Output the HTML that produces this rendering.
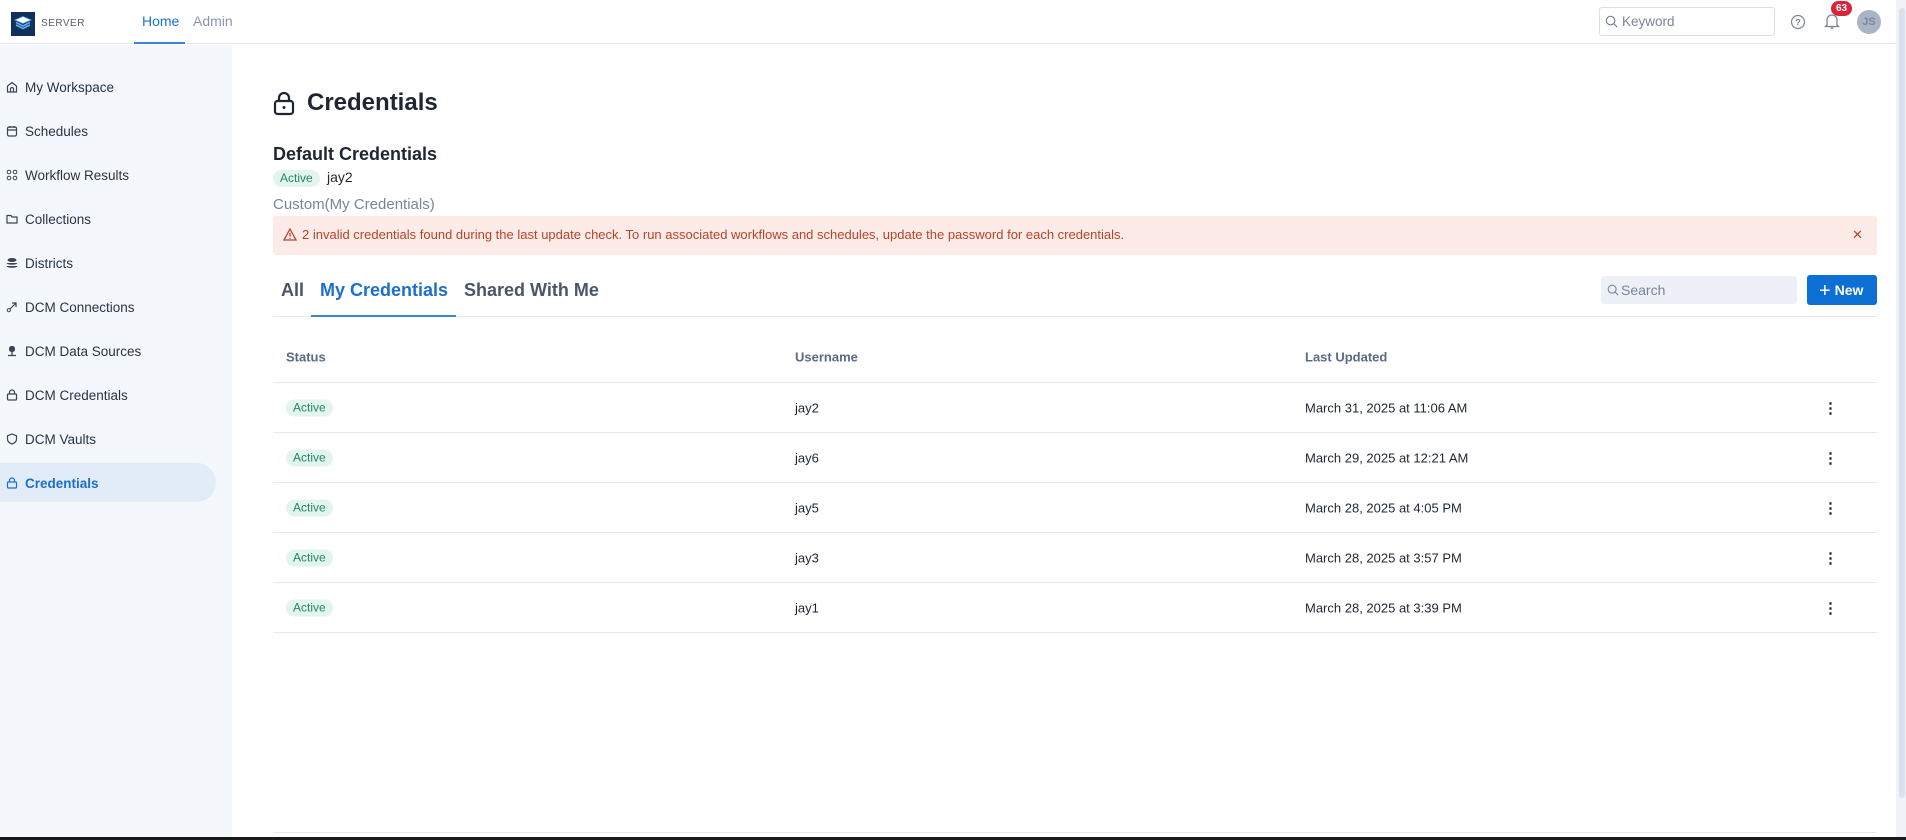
<!DOCTYPE html>
<html><head><meta charset="utf-8"><style>
*{box-sizing:border-box;margin:0;padding:0}
body{width:1906px;height:840px;overflow:hidden;background:#fff;font-family:"Liberation Sans",Arial,sans-serif;color:#1f2633;position:relative}
.a{position:absolute}
.hdr{left:0;top:0;width:1906px;height:44px;border-bottom:1px solid #e3e8f0;background:#fff}
.side{left:0;top:45px;width:232px;height:795px;background:#f4f7fc}
.nav{left:0;width:232px;height:20px;font-size:13.5px;color:#2b3444;display:flex;align-items:center}
.nav svg{position:absolute;left:6px}
.nav span{position:absolute;left:25px}
.badge{background:#e3f4ee;color:#1f8a5e;font-size:12px;border-radius:10px;height:17px;line-height:17px;padding:0 7px;display:inline-block}
.row{left:273px;width:1604px;height:50px;border-bottom:1px solid #e6eaf0;font-size:13px;color:#1f2633}
.row>*{position:absolute;top:50%;transform:translateY(-50%)}
</style></head><body>
<div class="a hdr"></div>
<div class="a" style="left:11px;top:12px;width:24px;height:24px;background:#11305a">
<svg width="24" height="24" viewBox="0 0 24 24"><path d="M5 13l7 3.5 7-3.5M5 10.5l7 3.5 7-3.5M12 5l7 3-7 3-7-3z" fill="none" stroke="#5eb0f0" stroke-width="1.6"/><path d="M12 5l7 3-7 3-7-3z" fill="#fff"/></svg></div>
<div class="a" style="left:41px;top:18px;font-size:10px;color:#555d6c;letter-spacing:.5px">SERVER</div>
<div class="a" style="left:142px;top:13px;font-size:14px;color:#1a73d9">Home</div>
<div class="a" style="left:134px;top:42px;width:51px;height:2px;background:#3b86da"></div>
<div class="a" style="left:193px;top:13px;font-size:14px;color:#8a96ac">Admin</div>
<div class="a" style="left:1599px;top:7px;width:176px;height:29px;border:1px solid #d9dfea;border-radius:3px"></div>
<svg class="a" style="left:1605px;top:15px" width="13" height="13" viewBox="0 0 14 14"><circle cx="6" cy="6" r="4.6" fill="none" stroke="#7a8599" stroke-width="1.3"/><path d="M9.5 9.5L13 13" stroke="#7a8599" stroke-width="1.3"/></svg>
<div class="a" style="left:1622px;top:14px;font-size:13.5px;color:#7a8599">Keyword</div>
<svg class="a" style="left:1790px;top:14px" width="16" height="16" viewBox="0 0 16 16"><circle cx="8" cy="8" r="6.5" fill="none" stroke="#7a8599" stroke-width="1.2"/><text x="8" y="11.5" font-size="9" font-family="Liberation Sans" text-anchor="middle" fill="#7a8599" font-weight="bold">?</text></svg>
<svg class="a" style="left:1824px;top:12px" width="16" height="18" viewBox="0 0 16 18"><path d="M3 13V8a5 5 0 0110 0v5l1.5 1.5h-13z M6.5 16h3" fill="none" stroke="#7a8599" stroke-width="1.3"/></svg>
<div class="a" style="left:1831px;top:1px;width:21px;height:15px;border-radius:8px;background:#d9253b;color:#fff;font-size:10px;font-weight:bold;text-align:center;line-height:15px">63</div>
<div class="a" style="left:1857px;top:10px;width:24px;height:24px;border-radius:50%;background:#a9b4c6;color:#7d889c;font-size:11px;font-weight:bold;text-align:center;line-height:24px">JS</div>
<div class="a" style="left:1896px;top:0;width:10px;height:837px;background:#f0f2f7"></div>
<div class="a" style="left:1899px;top:8px;width:6px;height:790px;background:#dbe1ec;border-radius:3px"></div>

<div class="a side"></div>
<div class="a" style="left:0;top:463px;width:216px;height:39px;background:#e1ecf8;border-radius:0 20px 20px 0"></div>
<div class="a nav" style="top:77px"><svg width="12" height="12" viewBox="0 0 12 12"><path d="M1.5 11V5L6 1.5 10.5 5v6h-9z M4.5 11V8a1.5 1.5 0 013 0v3" fill="none" stroke="#3b4455" stroke-width="1.2"/></svg><span>My Workspace</span></div>
<div class="a nav" style="top:121px"><svg width="12" height="12" viewBox="0 0 12 12"><rect x="1.5" y="2" width="9" height="9" rx="1.5" fill="none" stroke="#3b4455" stroke-width="1.2"/><path d="M1.5 5h9M4 1v2M8 1v2" stroke="#3b4455" stroke-width="1.2"/></svg><span>Schedules</span></div>
<div class="a nav" style="top:165px"><svg width="12" height="12" viewBox="0 0 12 12"><circle cx="3" cy="3" r="1.8" fill="none" stroke="#3b4455"/><circle cx="9" cy="3" r="1.8" fill="none" stroke="#3b4455"/><circle cx="3" cy="9" r="1.8" fill="none" stroke="#3b4455"/><circle cx="9" cy="9" r="1.8" fill="none" stroke="#3b4455"/></svg><span>Workflow Results</span></div>
<div class="a nav" style="top:209px"><svg width="12" height="12" viewBox="0 0 12 12"><path d="M1 2.5h4l1 1.5h5v6H1z" fill="none" stroke="#3b4455" stroke-width="1.2"/></svg><span>Collections</span></div>
<div class="a nav" style="top:253px"><svg width="12" height="12" viewBox="0 0 12 12"><ellipse cx="6" cy="3" rx="4.5" ry="2" fill="#3b4455"/><path d="M1.5 6c0 1.2 9 1.2 9 0M1.5 9c0 1.2 9 1.2 9 0" stroke="#3b4455" stroke-width="1.6" fill="none"/></svg><span>Districts</span></div>
<div class="a nav" style="top:297px"><svg width="12" height="12" viewBox="0 0 12 12"><path d="M4 8l6-6M6 2h4v4" fill="none" stroke="#3b4455" stroke-width="1.2"/><circle cx="2.8" cy="9.2" r="1.6" fill="none" stroke="#3b4455"/></svg><span>DCM Connections</span></div>
<div class="a nav" style="top:341px"><svg width="12" height="12" viewBox="0 0 12 12"><rect x="3" y="1" width="6" height="6" rx="2.5" fill="#3b4455"/><path d="M6 7v3M2 10.5h8" stroke="#3b4455" stroke-width="1.3"/></svg><span>DCM Data Sources</span></div>
<div class="a nav" style="top:385px"><svg width="12" height="12" viewBox="0 0 12 12"><rect x="1.5" y="5" width="9" height="6" rx="1" fill="none" stroke="#3b4455" stroke-width="1.2"/><path d="M3.5 5V3.5a2.5 2.5 0 015 0V5" fill="none" stroke="#3b4455" stroke-width="1.2"/></svg><span>DCM Credentials</span></div>
<div class="a nav" style="top:429px"><svg width="12" height="12" viewBox="0 0 12 12"><path d="M6 1l4.5 1.8v3.2c0 2.6-2 4.2-4.5 5-2.5-.8-4.5-2.4-4.5-5V2.8z" fill="none" stroke="#3b4455" stroke-width="1.2"/></svg><span>DCM Vaults</span></div>
<div class="a nav" style="top:473px;color:#1a6fd0;font-weight:bold"><svg width="12" height="12" viewBox="0 0 12 12"><rect x="1.5" y="5" width="9" height="6" rx="1" fill="none" stroke="#1a6fd0" stroke-width="1.2"/><path d="M3.5 5V3.5a2.5 2.5 0 015 0V5" fill="none" stroke="#1a6fd0" stroke-width="1.2"/></svg><span>Credentials</span></div>

<svg class="a" style="left:273px;top:91px" width="22" height="25" viewBox="0 0 22 25"><rect x="2" y="10" width="18" height="13" rx="2.5" fill="none" stroke="#1f2633" stroke-width="2.2"/><path d="M6 10V7a5 5 0 0110 0v3" fill="none" stroke="#1f2633" stroke-width="2.2"/><circle cx="11" cy="16.5" r="1.5" fill="#1f2633"/></svg>
<div class="a" style="left:307px;top:89px;font-size:24px;font-weight:bold;color:#1f2633">Credentials</div>
<div class="a" style="left:273px;top:144px;font-size:18px;font-weight:bold;color:#1f2633">Default Credentials</div>
<div class="a" style="left:273px;top:169px"><span class="badge">Active</span></div>
<div class="a" style="left:327px;top:169px;font-size:14px;color:#1f2633">jay2</div>
<div class="a" style="left:273px;top:196px;font-size:15px;color:#7a8599">Custom(My Credentials)</div>
<div class="a" style="left:273px;top:216px;width:1604px;height:39px;background:#fcebe6;border-radius:3px"></div>
<svg class="a" style="left:283px;top:228px" width="14" height="13" viewBox="0 0 14 13"><path d="M7 1L13 12H1z" fill="none" stroke="#b5452a" stroke-width="1.3"/><path d="M7 5v3.5M7 9.8v1" stroke="#b5452a" stroke-width="1.3"/></svg>
<div class="a" style="left:302px;top:227px;font-size:13px;color:#b5452a">2 invalid credentials found during the last update check. To run associated workflows and schedules, update the password for each credentials.</div>
<div class="a" style="left:1852px;top:227px;font-size:13px;color:#b5452a">✕</div>

<div class="a" style="left:273px;top:316px;width:1604px;height:1px;background:#e6eaf0"></div>
<div class="a" style="left:281px;top:280px;font-size:18px;font-weight:bold;color:#4a5568">All</div>
<div class="a" style="left:320px;top:280px;font-size:18px;font-weight:bold;color:#1a6fd0">My Credentials</div>
<div class="a" style="left:311px;top:315px;width:145px;height:2px;background:#3b86da"></div>
<div class="a" style="left:464px;top:280px;font-size:18px;font-weight:bold;color:#4a5568">Shared With Me</div>
<div class="a" style="left:1601px;top:276px;width:196px;height:28px;background:#edf0f6;border-radius:3px"></div>
<svg class="a" style="left:1607px;top:284px" width="12" height="12" viewBox="0 0 14 14"><circle cx="6" cy="6" r="4.6" fill="none" stroke="#7a8599" stroke-width="1.3"/><path d="M9.5 9.5L13 13" stroke="#7a8599" stroke-width="1.3"/></svg>
<div class="a" style="left:1621px;top:282px;font-size:14px;color:#7a8599">Search</div>
<div class="a" style="left:1807px;top:275px;width:70px;height:30px;background:#0b6fd3;border-radius:3px;color:#fff;font-size:14px;font-weight:bold;line-height:30px;padding-left:12px"><span style="font-size:20px;font-weight:normal;vertical-align:-2px">+</span> New</div>

<div class="a row" style="top:332px;height:51px;font-weight:bold;color:#5a6b85">
<span style="left:13px">Status</span><span style="left:522px">Username</span><span style="left:1032px">Last Updated</span></div>
<div class="a row" style="top:383px"><span style="left:13px"><span class="badge">Active</span></span><span style="left:522px">jay2</span><span style="left:1032px">March 31, 2025 at 11:06 AM</span><span style="left:1550px;font-weight:bold;font-size:15px">⋮</span></div>
<div class="a row" style="top:433px"><span style="left:13px"><span class="badge">Active</span></span><span style="left:522px">jay6</span><span style="left:1032px">March 29, 2025 at 12:21 AM</span><span style="left:1550px;font-weight:bold;font-size:15px">⋮</span></div>
<div class="a row" style="top:483px"><span style="left:13px"><span class="badge">Active</span></span><span style="left:522px">jay5</span><span style="left:1032px">March 28, 2025 at 4:05 PM</span><span style="left:1550px;font-weight:bold;font-size:15px">⋮</span></div>
<div class="a row" style="top:533px"><span style="left:13px"><span class="badge">Active</span></span><span style="left:522px">jay3</span><span style="left:1032px">March 28, 2025 at 3:57 PM</span><span style="left:1550px;font-weight:bold;font-size:15px">⋮</span></div>
<div class="a row" style="top:583px"><span style="left:13px"><span class="badge">Active</span></span><span style="left:522px">jay1</span><span style="left:1032px">March 28, 2025 at 3:39 PM</span><span style="left:1550px;font-weight:bold;font-size:15px">⋮</span></div>

<div class="a" style="left:273px;top:832px;width:1604px;height:1px;background:#e3e8f0"></div>
<div class="a" style="left:0;top:837px;width:1906px;height:3px;background:#1a1a1a"></div>
</body></html>
